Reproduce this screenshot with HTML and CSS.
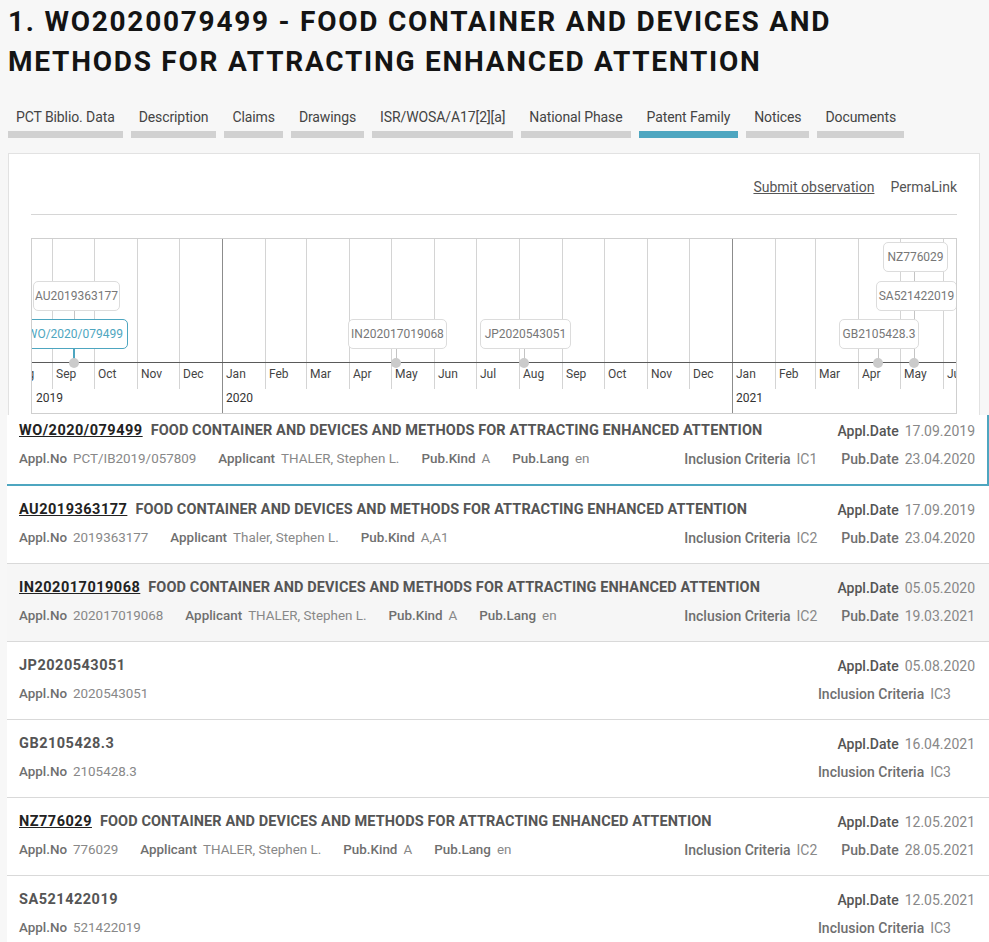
FILE: index.html
```html
<!DOCTYPE html>
<html lang="en">
<head>
<meta charset="utf-8">
<title>WO2020079499 - Patent Family</title>
<link rel="stylesheet" href="styles.css">
</head>
<body>
<h1 class="doc-title">1. WO2020079499 - FOOD CONTAINER AND DEVICES AND METHODS FOR ATTRACTING ENHANCED ATTENTION</h1>

<nav class="tabs">
  <a class="tab">PCT Biblio. Data</a>
  <a class="tab">Description</a>
  <a class="tab">Claims</a>
  <a class="tab">Drawings</a>
  <a class="tab">ISR/WOSA/A17[2][a]</a>
  <a class="tab">National Phase</a>
  <a class="tab active">Patent Family</a>
  <a class="tab">Notices</a>
  <a class="tab">Documents</a>
</nav>

<section class="panel">
  <div class="panel-links">
    <a class="link-under">Submit observation</a>
    <a class="link-plain">PermaLink</a>
  </div>
  <hr class="panel-rule">
  <div class="timeline">
    <div class="tl-canvas">
      <div class="vline" style="left:-23px"></div><span class="mlabel" style="left:-23px">Aug</span>
      <div class="vline" style="left:20px"></div><span class="mlabel" style="left:20px">Sep</span>
      <div class="vline" style="left:62px"></div><span class="mlabel" style="left:62px">Oct</span>
      <div class="vline" style="left:105px"></div><span class="mlabel" style="left:105px">Nov</span>
      <div class="vline" style="left:147px"></div><span class="mlabel" style="left:147px">Dec</span>
      <div class="vline year" style="left:190px"></div><span class="mlabel" style="left:190px">Jan</span>
      <div class="vline" style="left:233px"></div><span class="mlabel" style="left:233px">Feb</span>
      <div class="vline" style="left:274px"></div><span class="mlabel" style="left:274px">Mar</span>
      <div class="vline" style="left:317px"></div><span class="mlabel" style="left:317px">Apr</span>
      <div class="vline" style="left:359px"></div><span class="mlabel" style="left:359px">May</span>
      <div class="vline" style="left:402px"></div><span class="mlabel" style="left:402px">Jun</span>
      <div class="vline" style="left:444px"></div><span class="mlabel" style="left:444px">Jul</span>
      <div class="vline" style="left:487px"></div><span class="mlabel" style="left:487px">Aug</span>
      <div class="vline" style="left:530px"></div><span class="mlabel" style="left:530px">Sep</span>
      <div class="vline" style="left:572px"></div><span class="mlabel" style="left:572px">Oct</span>
      <div class="vline" style="left:615px"></div><span class="mlabel" style="left:615px">Nov</span>
      <div class="vline" style="left:657px"></div><span class="mlabel" style="left:657px">Dec</span>
      <div class="vline year" style="left:700px"></div><span class="mlabel" style="left:700px">Jan</span>
      <div class="vline" style="left:743px"></div><span class="mlabel" style="left:743px">Feb</span>
      <div class="vline" style="left:783px"></div><span class="mlabel" style="left:783px">Mar</span>
      <div class="vline" style="left:826px"></div><span class="mlabel" style="left:826px">Apr</span>
      <div class="vline" style="left:868px"></div><span class="mlabel" style="left:868px">May</span>
      <div class="vline" style="left:911px"></div><span class="mlabel" style="left:911px">Jun</span>

      <span class="ylabel" style="left:0px">2019</span>
      <span class="ylabel" style="left:190px">2020</span>
      <span class="ylabel" style="left:700px">2021</span>

      <div class="axis"></div>

      <div class="stem" style="left:42px;top:72px;height:51px"></div>
      <div class="stem" style="left:882px;top:33px;height:90px"></div>
      <div class="stem active" style="left:42px;top:110px;height:13px"></div>
      <div class="stem" style="left:364px;top:110px;height:13px"></div>
      <div class="stem" style="left:492px;top:110px;height:13px"></div>
      <div class="stem" style="left:846px;top:110px;height:13px"></div>

      <div class="dot" style="left:42px"></div>
      <div class="dot" style="left:364px"></div>
      <div class="dot" style="left:492px"></div>
      <div class="dot" style="left:846px"></div>
      <div class="dot" style="left:882px"></div>

      <div class="tbox" style="left:1px;top:42px;width:87px">AU2019363177</div>
      <div class="tbox active" style="left:-12px;top:80px;width:108px">WO/2020/079499</div>
      <div class="tbox" style="left:316px;top:80px;width:99px">IN202017019068</div>
      <div class="tbox" style="left:448px;top:80px;width:91px">JP2020543051</div>
      <div class="tbox" style="left:807px;top:80px;width:80px">GB2105428.3</div>
      <div class="tbox" style="left:844px;top:42px;width:81px">SA521422019</div>
      <div class="tbox" style="left:851px;top:3px;width:65px">NZ776029</div>
    </div>
  </div>
</section>

<ul class="family">
  <li class="fam-row first">
    <div class="line">
      <div class="left"><a class="pid">WO/2020/079499</a><span class="ptitle">FOOD CONTAINER AND DEVICES AND METHODS FOR ATTRACTING ENHANCED ATTENTION</span></div>
      <div class="right"><span class="pair"><b>Appl.Date</b><i>17.09.2019</i></span></div>
    </div>
    <div class="line meta">
      <div class="left">
        <span class="pair"><b>Appl.No</b><i>PCT/IB2019/057809</i></span>
        <span class="pair"><b>Applicant</b><i>THALER, Stephen L.</i></span>
        <span class="pair"><b>Pub.Kind</b><i>A</i></span>
        <span class="pair"><b>Pub.Lang</b><i>en</i></span>
      </div>
      <div class="right">
        <span class="pair"><b>Inclusion Criteria</b><i>IC1</i></span>
        <span class="pair"><b>Pub.Date</b><i>23.04.2020</i></span>
      </div>
    </div>
  </li>
  <li class="fam-row">
    <div class="line">
      <div class="left"><a class="pid">AU2019363177</a><span class="ptitle">FOOD CONTAINER AND DEVICES AND METHODS FOR ATTRACTING ENHANCED ATTENTION</span></div>
      <div class="right"><span class="pair"><b>Appl.Date</b><i>17.09.2019</i></span></div>
    </div>
    <div class="line meta">
      <div class="left">
        <span class="pair"><b>Appl.No</b><i>2019363177</i></span>
        <span class="pair"><b>Applicant</b><i>Thaler, Stephen L.</i></span>
        <span class="pair"><b>Pub.Kind</b><i>A,A1</i></span>
      </div>
      <div class="right">
        <span class="pair"><b>Inclusion Criteria</b><i>IC2</i></span>
        <span class="pair"><b>Pub.Date</b><i>23.04.2020</i></span>
      </div>
    </div>
  </li>
  <li class="fam-row shaded">
    <div class="line">
      <div class="left"><a class="pid">IN202017019068</a><span class="ptitle">FOOD CONTAINER AND DEVICES AND METHODS FOR ATTRACTING ENHANCED ATTENTION</span></div>
      <div class="right"><span class="pair"><b>Appl.Date</b><i>05.05.2020</i></span></div>
    </div>
    <div class="line meta">
      <div class="left">
        <span class="pair"><b>Appl.No</b><i>202017019068</i></span>
        <span class="pair"><b>Applicant</b><i>THALER, Stephen L.</i></span>
        <span class="pair"><b>Pub.Kind</b><i>A</i></span>
        <span class="pair"><b>Pub.Lang</b><i>en</i></span>
      </div>
      <div class="right">
        <span class="pair"><b>Inclusion Criteria</b><i>IC2</i></span>
        <span class="pair"><b>Pub.Date</b><i>19.03.2021</i></span>
      </div>
    </div>
  </li>
  <li class="fam-row">
    <div class="line">
      <div class="left"><span class="pid plain">JP2020543051</span></div>
      <div class="right"><span class="pair"><b>Appl.Date</b><i>05.08.2020</i></span></div>
    </div>
    <div class="line meta">
      <div class="left"><span class="pair"><b>Appl.No</b><i>2020543051</i></span></div>
      <div class="right short"><span class="pair"><b>Inclusion Criteria</b><i>IC3</i></span></div>
    </div>
  </li>
  <li class="fam-row">
    <div class="line">
      <div class="left"><span class="pid plain">GB2105428.3</span></div>
      <div class="right"><span class="pair"><b>Appl.Date</b><i>16.04.2021</i></span></div>
    </div>
    <div class="line meta">
      <div class="left"><span class="pair"><b>Appl.No</b><i>2105428.3</i></span></div>
      <div class="right short"><span class="pair"><b>Inclusion Criteria</b><i>IC3</i></span></div>
    </div>
  </li>
  <li class="fam-row">
    <div class="line">
      <div class="left"><a class="pid">NZ776029</a><span class="ptitle">FOOD CONTAINER AND DEVICES AND METHODS FOR ATTRACTING ENHANCED ATTENTION</span></div>
      <div class="right"><span class="pair"><b>Appl.Date</b><i>12.05.2021</i></span></div>
    </div>
    <div class="line meta">
      <div class="left">
        <span class="pair"><b>Appl.No</b><i>776029</i></span>
        <span class="pair"><b>Applicant</b><i>THALER, Stephen L.</i></span>
        <span class="pair"><b>Pub.Kind</b><i>A</i></span>
        <span class="pair"><b>Pub.Lang</b><i>en</i></span>
      </div>
      <div class="right">
        <span class="pair"><b>Inclusion Criteria</b><i>IC2</i></span>
        <span class="pair"><b>Pub.Date</b><i>28.05.2021</i></span>
      </div>
    </div>
  </li>
  <li class="fam-row">
    <div class="line">
      <div class="left"><span class="pid plain">SA521422019</span></div>
      <div class="right"><span class="pair"><b>Appl.Date</b><i>12.05.2021</i></span></div>
    </div>
    <div class="line meta">
      <div class="left"><span class="pair"><b>Appl.No</b><i>521422019</i></span></div>
      <div class="right short"><span class="pair"><b>Inclusion Criteria</b><i>IC3</i></span></div>
    </div>
  </li>
</ul>
</body>
</html>
```

FILE: styles.css
```css
* { box-sizing: border-box; }

html, body {
  margin: 0;
  padding: 0;
  background: #f7f7f7;
  font-family: Roboto, "Liberation Sans", sans-serif;
  color: #444;
  overflow: hidden;
}

.doc-title {
  margin: 0;
  padding: 2px 8px 0;
  font-size: 28px;
  line-height: 40px;
  font-weight: 700;
  letter-spacing: 1.75px;
  color: #141414;
  max-width: 880px;
}

.tabs {
  display: flex;
  gap: 8px;
  margin: 25px 0 0 8px;
}

.tab {
  display: block;
  padding: 0 8px 4px;
  font-size: 14px;
  line-height: 20px;
  letter-spacing: -0.1px;
  color: #444;
  border-bottom: 7px solid #d1d1d1;
  white-space: nowrap;
}

.tab.active { border-bottom-color: #4ea6c0; }

.panel {
  margin: 15px 0 0 8px;
  width: 972px;
  background: #fff;
  border: 1px solid #e2e2e2;
  border-bottom: none;
  padding: 23px 22px 1px;
}

.panel-links {
  display: flex;
  justify-content: flex-end;
  gap: 16px;
  font-size: 14px;
  line-height: 20px;
  color: #555;
}

.link-under { text-decoration: underline; }

.panel-rule {
  margin: 17px 0 0;
  border: none;
  border-top: 1px solid #d6d6d6;
  height: 0;
}

.timeline {
  margin-top: 23px;
  height: 176px;
  border: 1px solid #cfcfcf;
  overflow: hidden;
  background: #fff;
}

.tl-canvas {
  position: relative;
  height: 100%;
}

.vline {
  position: absolute;
  top: 0;
  width: 1px;
  height: 150px;
  background: #d4d4d4;
}

.vline.year {
  height: 176px;
  background: #8c8c8c;
}

.mlabel {
  position: absolute;
  top: 127px;
  margin-left: 4px;
  font-size: 12px;
  line-height: 16px;
  color: #444;
}

.ylabel {
  position: absolute;
  top: 151px;
  margin-left: 4px;
  font-size: 12px;
  line-height: 16px;
  color: #333;
}

.axis {
  position: absolute;
  left: 0;
  right: 0;
  top: 123px;
  height: 1px;
  background: #5a5a5a;
}

.stem {
  position: absolute;
  width: 1px;
  background: #c4c4c4;
}

.stem.active { background: #4ea6c0; width: 2px; margin-left: -1px; }

.dot {
  position: absolute;
  top: 119px;
  width: 10px;
  height: 10px;
  margin-left: -5px;
  border-radius: 50%;
  background: #cbcbcb;
}

.tbox {
  position: absolute;
  height: 30px;
  line-height: 28px;
  text-align: center;
  font-size: 12px;
  color: #777;
  background: #fff;
  border: 1px solid #dcdcdc;
  border-radius: 5px;
  white-space: nowrap;
  overflow: hidden;
}

.tbox.active {
  color: #4ea6c0;
  border-color: #4ea6c0;
  text-align: right;
  padding-right: 4px;
}

.family {
  list-style: none;
  margin: 0 0 0 7px;
  padding: 0;
  width: 982px;
  background: #fff;
}

.fam-row {
  padding: 14px 14px 15px 12px;
  border-bottom: 1px solid #d9d9d9;
}

.fam-row.first {
  padding-top: 6px;
  border-right: 2px solid #4ea6c0;
  border-bottom: 2px solid #4ea6c0;
  padding-right: 12px;
}

.fam-row.shaded { background: #f6f6f6; }

.line {
  display: flex;
  justify-content: space-between;
  align-items: center;
  height: 20px;
  font-size: 14px;
  line-height: 20px;
  white-space: nowrap;
}

.line.meta { margin-top: 8px; }

.left, .right {
  display: flex;
  align-items: center;
}

.meta .left { gap: 22px; font-size: 13.4px; }
.meta .right { gap: 24px; }
.meta .right.short { margin-right: 24px; }

.pid {
  font-weight: 700;
  font-size: 14.5px;
  letter-spacing: 0.5px;
  color: #222;
  text-decoration: underline;
  margin-right: 8px;
}

.pid.plain {
  text-decoration: none;
  color: #555;
}

.ptitle {
  font-weight: 700;
  font-size: 14.5px;
  letter-spacing: 0.1px;
  color: #555;
}

.pair b {
  font-weight: 500;
  color: #6f6f6f;
  margin-right: 6px;
}

.pair i {
  font-style: normal;
  color: #888;
}

.line:first-child .pair b { color: #555; }
```
